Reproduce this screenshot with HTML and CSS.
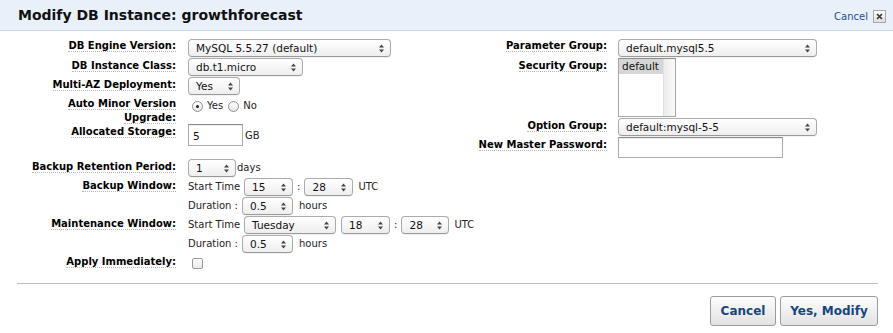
FILE: index.html
```html
<!DOCTYPE html>
<html>
<head>
<meta charset="utf-8">
<title>Modify DB Instance</title>
<link rel="stylesheet" href="styles.css">
</head>
<body>
<div class="dlg">
  <div class="hd">
    <h1 class="title">Modify DB Instance: growthforecast</h1>
    <div class="hd-right">
      <a class="hd-cancel">Cancel</a>
      <span class="xbox"><svg width="7" height="7" viewBox="0 0 7 7"><path d="M1 1L6 6M6 1L1 6" stroke="#333" stroke-width="1.6"/></svg></span>
    </div>
  </div>

  <div class="cols">
    <div class="col col-left">
      <div class="row">
        <div class="lbl"><span>DB Engine Version:</span></div>
        <div class="ctl"><div class="sel w203"><span>MySQL 5.5.27 (default)</span><svg class="arr" width="5" height="9" viewBox="0 0 5 9"><path d="M0 3.5L2.5 0.5L5 3.5ZM0 5.5L2.5 8.5L5 5.5Z"/></svg></div></div>
      </div>
      <div class="row">
        <div class="lbl pt2"><span>DB Instance Class:</span></div>
        <div class="ctl"><div class="sel w115"><span>db.t1.micro</span><svg class="arr" width="5" height="9" viewBox="0 0 5 9"><path d="M0 3.5L2.5 0.5L5 3.5ZM0 5.5L2.5 8.5L5 5.5Z"/></svg></div></div>
      </div>
      <div class="row">
        <div class="lbl pt2"><span>Multi-AZ Deployment:</span></div>
        <div class="ctl"><div class="sel w52"><span>Yes</span><svg class="arr" width="5" height="9" viewBox="0 0 5 9"><path d="M0 3.5L2.5 0.5L5 3.5ZM0 5.5L2.5 8.5L5 5.5Z"/></svg></div></div>
      </div>
      <div class="row row-auto">
        <div class="lbl lbl-two"><span>Auto Minor Version</span><br><span>Upgrade:</span></div>
        <div class="ctl ctl-radio">
          <span class="radio on"></span><span class="t rlabel">Yes</span>
          <span class="radio r2"></span><span class="t rlabel">No</span>
        </div>
      </div>
      <div class="row row-alloc">
        <div class="lbl pt2"><span>Allocated Storage:</span></div>
        <div class="ctl ctl-top"><div class="txt w55">5</div><span class="t unit-gb">GB</span></div>
      </div>

      <div class="row gap13">
        <div class="lbl pt2"><span>Backup Retention Period:</span></div>
        <div class="ctl"><div class="sel w48"><span>1</span><svg class="arr" width="5" height="9" viewBox="0 0 5 9"><path d="M0 3.5L2.5 0.5L5 3.5ZM0 5.5L2.5 8.5L5 5.5Z"/></svg></div><span class="t ml1">days</span></div>
      </div>
      <div class="row">
        <div class="lbl pt2"><span>Backup Window:</span></div>
        <div class="ctl">
          <span class="t">Start Time</span>
          <div class="sel w49 ml4"><span>15</span><svg class="arr" width="5" height="9" viewBox="0 0 5 9"><path d="M0 3.5L2.5 0.5L5 3.5ZM0 5.5L2.5 8.5L5 5.5Z"/></svg></div>
          <span class="t colon">:</span>
          <div class="sel w49"><span>28</span><svg class="arr" width="5" height="9" viewBox="0 0 5 9"><path d="M0 3.5L2.5 0.5L5 3.5ZM0 5.5L2.5 8.5L5 5.5Z"/></svg></div>
          <span class="t ml5">UTC</span>
        </div>
      </div>
      <div class="row">
        <div class="lbl"></div>
        <div class="ctl">
          <span class="t">Duration :</span>
          <div class="sel w51 ml4"><span>0.5</span><svg class="arr" width="5" height="9" viewBox="0 0 5 9"><path d="M0 3.5L2.5 0.5L5 3.5ZM0 5.5L2.5 8.5L5 5.5Z"/></svg></div>
          <span class="t ml6">hours</span>
        </div>
      </div>
      <div class="row">
        <div class="lbl pt2"><span>Maintenance Window:</span></div>
        <div class="ctl">
          <span class="t">Start Time</span>
          <div class="sel w92 ml4"><span>Tuesday</span><svg class="arr" width="5" height="9" viewBox="0 0 5 9"><path d="M0 3.5L2.5 0.5L5 3.5ZM0 5.5L2.5 8.5L5 5.5Z"/></svg></div>
          <div class="sel w49 ml5"><span>18</span><svg class="arr" width="5" height="9" viewBox="0 0 5 9"><path d="M0 3.5L2.5 0.5L5 3.5ZM0 5.5L2.5 8.5L5 5.5Z"/></svg></div>
          <span class="t colon">:</span>
          <div class="sel w48"><span>28</span><svg class="arr" width="5" height="9" viewBox="0 0 5 9"><path d="M0 3.5L2.5 0.5L5 3.5ZM0 5.5L2.5 8.5L5 5.5Z"/></svg></div>
          <span class="t ml5">UTC</span>
        </div>
      </div>
      <div class="row">
        <div class="lbl"></div>
        <div class="ctl">
          <span class="t">Duration :</span>
          <div class="sel w51 ml4"><span>0.5</span><svg class="arr" width="5" height="9" viewBox="0 0 5 9"><path d="M0 3.5L2.5 0.5L5 3.5ZM0 5.5L2.5 8.5L5 5.5Z"/></svg></div>
          <span class="t ml6">hours</span>
        </div>
      </div>
      <div class="row">
        <div class="lbl pt2"><span>Apply Immediately:</span></div>
        <div class="ctl"><span class="check"></span></div>
      </div>
    </div>

    <div class="col col-right">
      <div class="row">
        <div class="lbl"><span>Parameter Group:</span></div>
        <div class="ctl"><div class="sel w199"><span>default.mysql5.5</span><svg class="arr" width="5" height="9" viewBox="0 0 5 9"><path d="M0 3.5L2.5 0.5L5 3.5ZM0 5.5L2.5 8.5L5 5.5Z"/></svg></div></div>
      </div>
      <div class="row row-sec">
        <div class="lbl pt2"><span>Security Group:</span></div>
        <div class="listbox">
          <div class="lb-items"><div class="lb-item sel-item">default</div></div>
          <div class="lb-scroll"></div>
        </div>
      </div>
      <div class="row">
        <div class="lbl pt2"><span>Option Group:</span></div>
        <div class="ctl"><div class="sel w199"><span>default:mysql-5-5</span><svg class="arr" width="5" height="9" viewBox="0 0 5 9"><path d="M0 3.5L2.5 0.5L5 3.5ZM0 5.5L2.5 8.5L5 5.5Z"/></svg></div></div>
      </div>
      <div class="row row-pw">
        <div class="lbl pt2"><span>New Master Password:</span></div>
        <div class="ctl ctl-top"><div class="txt w165 h21"></div></div>
      </div>
    </div>
  </div>

  <div class="sep"></div>

  <div class="actions">
    <button class="btn w66">Cancel</button>
    <button class="btn w98">Yes, Modify</button>
  </div>
</div>
</body>
</html>
```

FILE: styles.css
```css
html, body {
  margin: 0;
  padding: 0;
  background: #ffffff;
}
body {
  font-family: "DejaVu Sans", Verdana, sans-serif;
  font-size: 10px;
  color: #000;
}

.hd {
  height: 30px;
  border-bottom: 1px solid #c9d7e8;
  background: #e8f0fa;
  display: flex;
  align-items: center;
  justify-content: space-between;
  padding: 0 7px 0 18px;
}
.title {
  margin: 0;
  font-size: 14px;
  font-weight: bold;
  line-height: 30px;
  color: #111;
}
.hd-right {
  display: flex;
  align-items: center;
  gap: 5px;
  padding-top: 2px;
}
.hd-cancel {
  color: #1f4f8b;
  font-size: 10px;
  text-decoration: none;
}
.xbox {
  width: 11px;
  height: 11px;
  border: 1px solid #a8a8a8;
  background: linear-gradient(#fbfbfb, #e0e0e0);
  display: flex;
  align-items: center;
  justify-content: center;
}

.cols {
  display: flex;
  padding-top: 8px;
}
.col-left {
  width: 450px;
  flex: none;
}
.col-right {
  flex: 1;
}
.row {
  display: flex;
  align-items: flex-start;
  height: 19px;
}
.lbl {
  flex: none;
  text-align: right;
  font-weight: bold;
  line-height: 12px;
  padding-top: 1px;
  color: #000;
}
.col-left .lbl { width: 176px; margin-right: 12px; }
.col-right .lbl { width: 157px; margin-right: 11px; }
.lbl span { border-bottom: 1px dotted #b8b8b8; }
.pt2 { padding-top: 2px; }
.lbl-two { line-height: 13.5px; }

.ctl {
  display: flex;
  align-items: center;
  height: 18px;
  white-space: nowrap;
}
.ctl-top { align-items: flex-start; height: auto; }

.t {
  font-size: 10px;
  line-height: 18px;
  color: #222;
}
.ml1 { margin-left: 1px; }
.ml4 { margin-left: 4px; }
.ml5 { margin-left: 5px; }
.ml6 { margin-left: 6px; }
.colon { margin: 0 4px; }

.sel {
  height: 18px;
  box-sizing: border-box;
  border: 1px solid #ababab;
  border-bottom-color: #999;
  border-radius: 4px;
  background: linear-gradient(#ffffff, #eeeeee);
  box-shadow: 0 1px 0 rgba(0, 0, 0, 0.05);
  display: flex;
  align-items: center;
  justify-content: space-between;
  padding: 0 6px 0 7px;
  font-size: 10.5px;
  color: #111;
  flex: none;
}
.arr { fill: #444; flex: none; }
.w203 { width: 203px; }
.w199 { width: 199px; }
.w115 { width: 115px; }
.w92 { width: 92px; }
.w52 { width: 52px; }
.w51 { width: 51px; }
.w49 { width: 49px; }
.w48 { width: 48px; }

.row-auto { height: 28px; }
.ctl-radio { margin-top: 3px; height: 14px; }
.radio {
  width: 11px;
  height: 11px;
  box-sizing: border-box;
  border-radius: 50%;
  border: 1px solid #8e8e8e;
  background: linear-gradient(#ffffff, #e6e6e6);
  margin-left: 4px;
  display: flex;
  align-items: center;
  justify-content: center;
  flex: none;
}
.radio.on::after {
  content: "";
  width: 3px;
  height: 3px;
  border-radius: 50%;
  background: #222;
}
.radio.r2 { margin-left: 5px; }
.rlabel { margin-left: 4px; line-height: 14px; }

.row-alloc { height: 22px; }
.txt {
  box-sizing: border-box;
  height: 22px;
  border: 1px solid #ababab;
  border-top-color: #8a8a8a;
  background: #fff;
  box-shadow: inset 0 1px 1px rgba(0, 0, 0, 0.08);
  font-size: 10.5px;
  line-height: 14px;
  padding: 4px 4px 0;
  color: #111;
}
.w55 { width: 55px; }
.w165 { width: 165px; }
.h21 { height: 21px; }
.unit-gb { margin-left: 2px; line-height: 14px; padding-top: 5px; }

.gap13 { margin-top: 13px; }

.check {
  width: 11px;
  height: 11px;
  box-sizing: border-box;
  border: 1px solid #9a9a9a;
  border-radius: 2px;
  background: linear-gradient(#ffffff, #e8e8e8);
  margin-left: 4px;
}

.row-sec { height: 60px; }
.listbox {
  width: 58px;
  height: 59px;
  box-sizing: border-box;
  border: 1px solid #a5a5a5;
  border-top-color: #8c8c8c;
  background: #fff;
  display: flex;
}
.lb-items { flex: 1; padding-top: 0; }
.lb-item {
  height: 15px;
  line-height: 15px;
  padding-left: 3px;
  font-size: 10.5px;
  color: #111;
}
.sel-item { background: #d6d6d6; }
.lb-scroll {
  width: 11px;
  border-left: 1px solid #e0e0e0;
  background: linear-gradient(90deg, #ececec, #fafafa);
}
.row-pw { height: 21px; }

.sep {
  height: 1px;
  background: #bdbdbd;
  margin: 10px 15px 0 17px;
}

.actions {
  display: flex;
  justify-content: flex-end;
  gap: 4px;
  padding: 12px 15px 0 0;
}
.btn {
  height: 30px;
  box-sizing: border-box;
  border: 1px solid #9c9c9c;
  border-radius: 3px;
  background: linear-gradient(#fdfdfd, #e2e2e2);
  font-family: "DejaVu Sans", Verdana, sans-serif;
  font-size: 12px;
  font-weight: bold;
  color: #17467d;
  padding: 0;
}
.w66 { width: 66px; }
.w98 { width: 98px; }
```
